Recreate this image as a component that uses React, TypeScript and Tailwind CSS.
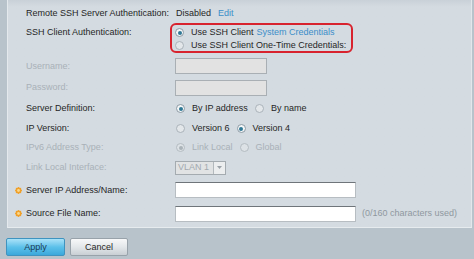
import React from 'react';

const Star: React.FC = () => (
  <svg width="7" height="7" viewBox="0 0 8 8">
    <rect x="1" y="1" width="6" height="6" fill="#f0a02a" />
    <rect x="1" y="1" width="6" height="6" fill="#f0a02a" transform="rotate(45 4 4)" />
    <circle cx="4" cy="4" r="1.6" fill="#fbd88a" />
  </svg>
);

const Radio: React.FC<{ on?: boolean; disabled?: boolean }> = ({ on, disabled }) => (
  <span
    className={`w-[9px] h-[9px] rounded-full border flex items-center justify-center shrink-0 ${
      disabled ? 'border-[#b4bcc2] bg-[#dde2e6]' : on ? 'border-[#8d9ba5] bg-[#f4f6f7]' : 'border-[#aab3ba] bg-[#e3e7ea]'
    }`}
  >
    {on && <span className={`w-[4px] h-[4px] rounded-full ${disabled ? 'bg-[#aab3b9]' : 'bg-[#2f7895]'}`} />}
  </span>
);

const Label: React.FC<{ children: React.ReactNode; disabled?: boolean; req?: boolean }> = ({ children, disabled, req }) => (
  <div className="w-[160px] flex items-center shrink-0">
    <span className="w-[11px] flex items-center">{req && <Star />}</span>
    <span className={disabled ? 'text-[#a9b1b8]' : 'text-[#262626]'}>{children}</span>
  </div>
);

const Opt: React.FC<{ on?: boolean; disabled?: boolean; label: string }> = ({ on, disabled, label }) => (
  <div className="flex items-center mr-[7px]">
    <Radio on={on} disabled={disabled} />
    <span className={`ml-[7px] ${disabled ? 'text-[#a9b1b8]' : 'text-[#262626]'}`}>{label}</span>
  </div>
);

export default function App() {
  return (
    <div
      className="w-[474px] h-[259px] bg-[#b8c3cb] flex flex-col overflow-hidden text-[9px] leading-[13px]"
      style={{ fontFamily: '"Liberation Sans", Arial, sans-serif' }}
    >
      <div className="ml-[7px] mr-[2px] h-[228px] bg-[#d4dbe1] border-l border-[#e4e9ed] border-b border-b-[#e6ebee] border-r border-r-[#e2e7eb] flex flex-col pl-[7px] pt-[4px] bg-gradient-to-b from-[#c9d1d8] via-[#d4dbe1] via-[3%] to-[#d4dbe1]">
        <div className="flex items-center h-[18px]">
          <Label>Remote SSH Server Authentication:</Label>
          <span className="text-[#262626] ml-[1px]">Disabled</span>
          <span className="text-[#3b8ec9] ml-[7px]">Edit</span>
        </div>

        <div className="flex h-[33px]">
          <div className="pt-[4px]">
            <Label>SSH Client Authentication:</Label>
          </div>
          <div className="ml-[-5px] mt-[1px] w-[183px] h-[30px] border-2 border-[#d8232e] rounded-[6px] pl-[3px] pt-[1px] flex flex-col">
            <div className="flex items-center h-[13px]">
              <Radio on />
              <span className="ml-[7px] text-[#262626]">Use SSH Client</span>
              <span className="ml-[3px] text-[#3b8ec9]">System Credentials</span>
            </div>
            <div className="flex items-center h-[13px]">
              <Radio />
              <span className="ml-[7px] text-[#262626]">Use SSH Client One-Time Credentials:</span>
            </div>
          </div>
        </div>

        <div className="flex items-center h-[22px]">
          <Label disabled>Username:</Label>
          <div className="w-[92px] h-[16px] bg-[#e2e2e2] border border-[#a9afb4]" />
        </div>
        <div className="flex items-center h-[21px]">
          <Label disabled>Password:</Label>
          <div className="w-[92px] h-[16px] bg-[#e2e2e2] border border-[#a9afb4]" />
        </div>

        <div className="flex items-center h-[21px]">
          <Label>Server Definition:</Label>
          <div className="flex items-center ml-[1px]">
            <Opt on label="By IP address" />
            <Opt label="By name" />
          </div>
        </div>
        <div className="flex items-center h-[19px]">
          <Label>IP Version:</Label>
          <div className="flex items-center ml-[1px]">
            <Opt label="Version 6" />
            <Opt on label="Version 4" />
          </div>
        </div>
        <div className="flex items-center h-[19px]">
          <Label disabled>IPv6 Address Type:</Label>
          <div className="flex items-center ml-[1px]">
            <Opt on disabled label="Link Local" />
            <Opt disabled label="Global" />
          </div>
        </div>
        <div className="flex items-center h-[21px]">
          <Label disabled>Link Local Interface:</Label>
          <div className="w-[51px] h-[14px] bg-[#e1e3e4] border border-[#a4abb0] flex items-center">
            <span className="flex-1 pl-[2px] text-[#a2a9af]">VLAN 1</span>
            <span className="w-[12px] h-full border-l border-[#b3b9bd] bg-[#eceeef] flex items-center justify-center">
              <svg width="5" height="3" viewBox="0 0 5 3">
                <path d="M0 0h5L2.5 3z" fill="#9aa1a7" />
              </svg>
            </span>
          </div>
        </div>

        <div className="flex items-center h-[24px]">
          <Label req>Server IP Address/Name:</Label>
          <div className="w-[181px] h-[16px] bg-white border border-[#b7bdc2] border-t-[#6f757a]" />
        </div>
        <div className="flex items-center h-[23px]">
          <Label req>Source File Name:</Label>
          <div className="w-[181px] h-[16px] bg-white border border-[#b7bdc2] border-t-[#6f757a]" />
          <span className="ml-[6px] text-[#8f989f]">(0/160 characters used)</span>
        </div>
      </div>

      <div className="flex items-center gap-[5px] pl-[6px] pt-[10px]">
        <button className="w-[59px] h-[18px] rounded-[2px] border border-[#3f93bf] bg-gradient-to-b from-[#a9e2f8] via-[#5cc1ea] to-[#3aa8db] text-[#1b3a52] text-[9px] leading-none">
          Apply
        </button>
        <button className="w-[58px] h-[18px] rounded-[2px] border border-[#98a2aa] bg-gradient-to-b from-[#f7f8f9] via-[#e3e7ea] to-[#c9cfd4] text-[#262626] text-[9px] leading-none">
          Cancel
        </button>
      </div>
    </div>
  );
}
